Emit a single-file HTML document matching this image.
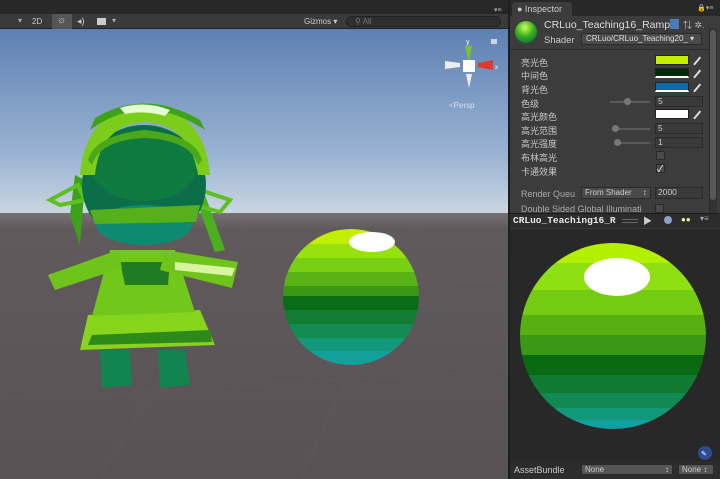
<!DOCTYPE html>
<html><head><meta charset="utf-8"><style>
*{margin:0;padding:0;box-sizing:border-box}
body{width:720px;height:479px;overflow:hidden;background:#2a2a2a;font-family:"Liberation Sans","Noto Sans CJK SC",sans-serif;position:relative;font-size:9px;color:#c4c4c4}
.a{position:absolute}
.lbl{position:absolute;left:521px;font-size:9px;color:#c8c8c8}
.sw{position:absolute;left:655px;width:34px;height:10px;border:1px solid #222}
.fld{position:absolute;left:655px;width:48px;height:11px;background:#3a3a3a;border:1px solid #2a2a2a;color:#ccc;font-size:8.5px;padding-left:2px;line-height:9px}
.sl{position:absolute;height:2px;background:#5a5a5a}
.knob{position:absolute;width:7px;height:7px;border-radius:50%;background:#777}
.pen{position:absolute;left:692px;width:10px;height:1.5px;background:#ddd;transform:rotate(-50deg)}
</style></head><body>
<div class="a" style="left:0;top:0;width:508px;height:14px;background:#282828"></div>
<div class="a" style="left:0;top:14px;width:508px;height:15px;background:#3a3a3a;border-bottom:1px solid #222"></div>
<div class="a" style="left:18px;top:16px;color:#aaa;font-size:8px">▾</div>
<div class="a" style="left:32px;top:17px;color:#ccc;font-size:8px">2D</div>
<div class="a" style="left:52px;top:14px;width:20px;height:15px;background:#555"></div>
<div class="a" style="left:57px;top:15px;color:#ddd;font-size:10px">☼</div>
<div class="a" style="left:77px;top:16px;color:#ccc;font-size:9px">◂)</div>
<div class="a" style="left:97px;top:18px;width:9px;height:7px;background:#ccc"></div>
<div class="a" style="left:112px;top:16px;color:#aaa;font-size:8px">▾</div>
<div class="a" style="left:304px;top:17px;color:#ccc;font-size:8px">Gizmos ▾</div>
<div class="a" style="left:346px;top:16px;width:155px;height:11px;border-radius:6px;background:#2e2e2e;border:1px solid #222;color:#777;font-size:8px;padding-left:8px;line-height:9px">⚲ All</div>
<div class="a" style="left:494px;top:6px;color:#aaa;font-size:7px">▾≡</div>
<svg class="a" style="left:0;top:29px" width="508" height="450" viewBox="0 29 508 450">
<defs>
<linearGradient id="sky" x1="0" y1="0" x2="0" y2="1"><stop offset="0" stop-color="#5d80b3"/><stop offset="0.7" stop-color="#9db5d4"/><stop offset="1" stop-color="#cbd6e0"/></linearGradient>
<linearGradient id="gr" x1="0" y1="0" x2="0" y2="1"><stop offset="0" stop-color="#777072"/><stop offset="0.06" stop-color="#615a5c"/><stop offset="1" stop-color="#595254"/></linearGradient>
<clipPath id="s1"><circle cx="351" cy="297" r="68"/></clipPath>
</defs>
<rect x="0" y="29" width="508" height="185" fill="url(#sky)"/>
<rect x="0" y="213" width="508" height="266" fill="url(#gr)"/>
<g stroke="#6a6365" stroke-width="1" opacity="0.35"><line x1="0" y1="300" x2="508" y2="280"/><line x1="0" y1="400" x2="508" y2="370"/><line x1="300" y1="479" x2="420" y2="220"/><line x1="100" y1="479" x2="250" y2="220"/></g>
<g clip-path="url(#s1)">
<rect x="280" y="228" width="145" height="16" fill="#c2ee00"/>
<rect x="280" y="244" width="145" height="14" fill="#97e20c"/>
<rect x="280" y="258" width="145" height="14" fill="#78cf14"/>
<rect x="280" y="272" width="145" height="14" fill="#58b414"/>
<rect x="280" y="286" width="145" height="10" fill="#3a9812"/>
<rect x="280" y="296" width="145" height="14" fill="#0b6c18"/>
<rect x="280" y="310" width="145" height="14" fill="#127c34"/>
<rect x="280" y="324" width="145" height="14" fill="#128c52"/>
<rect x="280" y="338" width="145" height="13" fill="#12987a"/>
<rect x="280" y="351" width="145" height="15" fill="#14a09a"/>
</g>
<ellipse cx="372" cy="242" rx="23" ry="10" fill="#fff"/>
<path d="M88 315 L200 310 L215 345 L80 350 Z" fill="#86d41c"/>
<path d="M92 335 L210 330 L212 342 L88 345 Z" fill="#2e8a18"/>
<path d="M110 250 L175 250 L195 312 L92 316 Z" fill="#72c81a"/>
<path d="M120 262 L170 262 L168 285 L125 285 Z" fill="#1f7c22"/>
<path d="M48 275 L118 250 L122 268 L55 290 Z" fill="#6ec41a"/>
<path d="M165 250 L238 262 L232 288 L160 270 Z" fill="#6ec41a"/>
<path d="M175 262 L235 268 L232 276 L175 270 Z" fill="#d8f4a0"/>
<path d="M100 350 L130 350 L132 385 L102 388 Z" fill="#128450"/>
<path d="M158 350 L185 350 L190 385 L160 388 Z" fill="#128450"/>
<path d="M70 215 L75 175 L85 180 L80 245 Z" fill="#3ea218"/>
<path d="M205 195 L225 250 L215 252 L198 205 Z" fill="#4cb01c"/>
<path d="M50 200 L78 185 L85 200 L60 205 Z" fill="none" stroke="#5ec020" stroke-width="4"/>
<path d="M185 185 L230 200 L220 212 L195 205 Z" fill="none" stroke="#5ec020" stroke-width="4"/>
<ellipse cx="144" cy="185" rx="62" ry="60" fill="#0b6e48"/>
<ellipse cx="144" cy="225" rx="48" ry="20" fill="#0e8a70"/>
<ellipse cx="144" cy="168" rx="52" ry="33" fill="#0f7a40"/>
<path d="M90 210 L200 205 L196 222 L95 224 Z" fill="#56b01c"/>
<path d="M80 175 Q85 110 145 105 Q205 110 210 175 L198 175 Q190 125 145 122 Q100 125 95 175 Z" fill="#7ccc1c"/>
<path d="M88 160 Q95 135 145 130 Q195 135 202 160 L198 165 Q190 140 145 138 Q100 140 92 165 Z" fill="#4aa81a"/>
<path d="M90 130 Q145 90 205 130 L200 120 Q145 88 95 118 Z" fill="#3ea218"/>
<path d="M120 108 Q145 100 170 110 L165 116 Q145 110 125 114 Z" fill="#e6ffd0"/>
<polygon points="465,46 472,46 469,62" fill="#7ac428"/>
<text x="466" y="44" fill="#fff" font-size="7" font-family="Liberation Sans">y</text>
<polygon points="478,63 493,60 493,70 478,67" fill="#e23a2a"/>
<text x="495" y="69" fill="#fff" font-size="6" font-family="Liberation Sans">x</text>
<polygon points="460,63 445,61 445,69 460,67" fill="#eee"/>
<polygon points="466,74 472,74 469,88" fill="#eee"/>
<rect x="463" y="60" width="12" height="12" fill="#fff"/>
<text x="449" y="108" fill="#d6e0ee" font-size="8" font-family="Liberation Sans">&lt;Persp</text>
<rect x="491" y="39" width="6" height="5" fill="#ccd6e4"/>
</svg>
<div class="a" style="left:508px;top:0;width:212px;height:479px;background:#3c3c3c;border-left:2px solid #1e1e1e"></div>
<div class="a" style="left:510px;top:0;width:210px;height:16px;background:#282828"></div>
<div class="a" style="left:512px;top:2px;width:60px;height:14px;background:#3c3c3c;border-radius:3px 3px 0 0;color:#ccc;font-size:9px;padding:2px 0 0 5px">● Inspector</div>
<div class="a" style="left:697px;top:4px;color:#aaa;font-size:7px">🔒▾≡</div>
<div class="a" style="left:515px;top:21px;width:22px;height:22px;border-radius:50%;background:radial-gradient(circle at 45% 30%,#c8ff60,#3cb01c 45%,#0a7a40 80%)"></div>
<div class="a" style="left:544px;top:19px;color:#ddd;font-size:10.5px;width:150px;overflow:hidden;white-space:nowrap">CRLuo_Teaching16_Ramp</div>
<div class="a" style="left:670px;top:19px;width:9px;height:10px;background:#4a7ab8"></div>
<div class="a" style="left:683px;top:18px;color:#bbb;font-size:9px">⇅ ✲.</div>
<div class="a" style="left:544px;top:35px;color:#ccc;font-size:9.5px">Shader</div>
<div class="a" style="left:581px;top:33px;width:121px;height:12px;background:#4a4a4a;border:1px solid #2a2a2a;border-radius:2px;color:#ddd;font-size:8px;padding-left:4px;white-space:nowrap;overflow:hidden">CRLuo/CRLuo_Teaching20_ ▾</div>
<div class="a" style="left:510px;top:49px;width:198px;height:1px;background:#2c2c2c"></div>
<div class="a" style="left:709px;top:28px;width:8px;height:185px;background:#333;border-left:1px solid #2a2a2a"></div>
<div class="a" style="left:710px;top:30px;width:6px;height:170px;background:#585858;border-radius:3px"></div>
<div class="lbl" style="top:56px">亮光色</div><div class="sw" style="top:55px;background:#c0f000"></div><div class="pen" style="top:60px"></div>
<div class="lbl" style="top:69px">中间色</div><div class="sw" style="top:68px;background:#002a08;border-bottom:2px solid #fff"></div><div class="pen" style="top:73px"></div>
<div class="lbl" style="top:83px">背光色</div><div class="sw" style="top:82px;background:#0e6aa8;border-bottom:2px solid #fff"></div><div class="pen" style="top:87px"></div>
<div class="lbl" style="top:97px">色级</div><div class="sl" style="left:610px;top:101px;width:40px"></div><div class="knob" style="left:624px;top:98px"></div><div class="fld" style="top:96px">5</div>
<div class="lbl" style="top:110px">高光颜色</div><div class="sw" style="top:109px;background:#fff"></div><div class="pen" style="top:114px"></div>
<div class="lbl" style="top:124px">高光范围</div><div class="sl" style="left:612px;top:128px;width:38px"></div><div class="knob" style="left:612px;top:125px"></div><div class="fld" style="top:123px">5</div>
<div class="lbl" style="top:137px">高光强度</div><div class="sl" style="left:614px;top:142px;width:36px"></div><div class="knob" style="left:614px;top:139px"></div><div class="fld" style="top:137px">1</div>
<div class="lbl" style="top:151px">布林高光</div><div class="a" style="left:656px;top:151px;width:9px;height:9px;background:#4a4a4a;border:1px solid #2a2a2a"></div>
<div class="lbl" style="top:165px">卡通效果</div><div class="a" style="left:656px;top:164px;width:9px;height:9px;background:#4a4a4a;border:1px solid #2a2a2a;color:#fff;font-size:9px;line-height:8px">✓</div>
<div class="lbl" style="top:189px;color:#aaa">Render Queu</div>
<div class="a" style="left:581px;top:187px;width:70px;height:12px;background:#4a4a4a;border:1px solid #2a2a2a;color:#ccc;font-size:8px;padding-left:3px">From Shader &nbsp;&nbsp;&nbsp;&nbsp;↕</div>
<div class="fld" style="top:187px;height:12px">2000</div>
<div class="lbl" style="top:204px;color:#aaa;white-space:nowrap">Double Sided Global Illuminati</div><div class="a" style="left:655px;top:204px;width:9px;height:9px;background:#4a4a4a;border:1px solid #2a2a2a"></div>
<div class="a" style="left:510px;top:213px;width:210px;height:15px;background:#2c2c2c;border-top:1px solid #1c1c1c"></div>
<div class="a" style="left:513px;top:215px;color:#e8e8e8;font-size:9.5px;font-weight:bold;font-family:'Liberation Mono',monospace">CRLuo_Teaching16_R</div>
<div class="a" style="left:622px;top:219px;width:16px;height:4px;border-top:1px solid #666;border-bottom:1px solid #666"></div>
<div class="a" style="left:643px;top:214px;color:#ccc;font-size:9px">▶</div>
<div class="a" style="left:664px;top:216px;width:8px;height:8px;border-radius:50%;background:#8aa0c8"></div>
<div class="a" style="left:681px;top:215px;color:#ee9;font-size:8px">●●</div>
<div class="a" style="left:700px;top:214px;color:#aaa;font-size:8px">▾≡</div>
<div class="a" style="left:510px;top:229px;width:210px;height:232px;background:#282828"></div>
<svg class="a" style="left:510px;top:229px" width="210" height="232" viewBox="510 229 210 232">
<defs><clipPath id="s2"><circle cx="613" cy="336" r="93"/></clipPath></defs>
<g clip-path="url(#s2)">
<rect x="518" y="240" width="200" height="23" fill="#b2f000"/>
<rect x="518" y="263" width="200" height="27" fill="#8ee012"/>
<rect x="518" y="290" width="200" height="25" fill="#73cc12"/>
<rect x="518" y="315" width="200" height="20" fill="#56b012"/>
<rect x="518" y="335" width="200" height="20" fill="#3a9814"/>
<rect x="518" y="355" width="200" height="20" fill="#0a6a12"/>
<rect x="518" y="375" width="200" height="18" fill="#107a32"/>
<rect x="518" y="393" width="200" height="15" fill="#108a52"/>
<rect x="518" y="408" width="200" height="12" fill="#109878"/>
<rect x="518" y="420" width="200" height="15" fill="#10a0a0"/>
</g>
<ellipse cx="617" cy="277" rx="33" ry="19" fill="#fff"/>
<circle cx="705" cy="453" r="7" fill="#2a4c90"/>
<text x="701" y="456" fill="#fff" font-size="7" font-family="DejaVu Sans">✎</text>
</svg>
<div class="a" style="left:510px;top:461px;width:210px;height:18px;background:#2c2c2c"></div>
<div class="a" style="left:514px;top:465px;color:#ccc;font-size:9px">AssetBundle</div>
<div class="a" style="left:581px;top:464px;width:92px;height:11px;background:#555;border:1px solid #2a2a2a;border-radius:2px;color:#ccc;font-size:8px;padding-left:3px;line-height:9px">None<span style="float:right;padding-right:3px">↕</span></div>
<div class="a" style="left:678px;top:464px;width:36px;height:11px;background:#555;border:1px solid #2a2a2a;border-radius:2px;color:#ccc;font-size:8px;padding-left:3px;line-height:9px">None ↕</div>
</body></html>
